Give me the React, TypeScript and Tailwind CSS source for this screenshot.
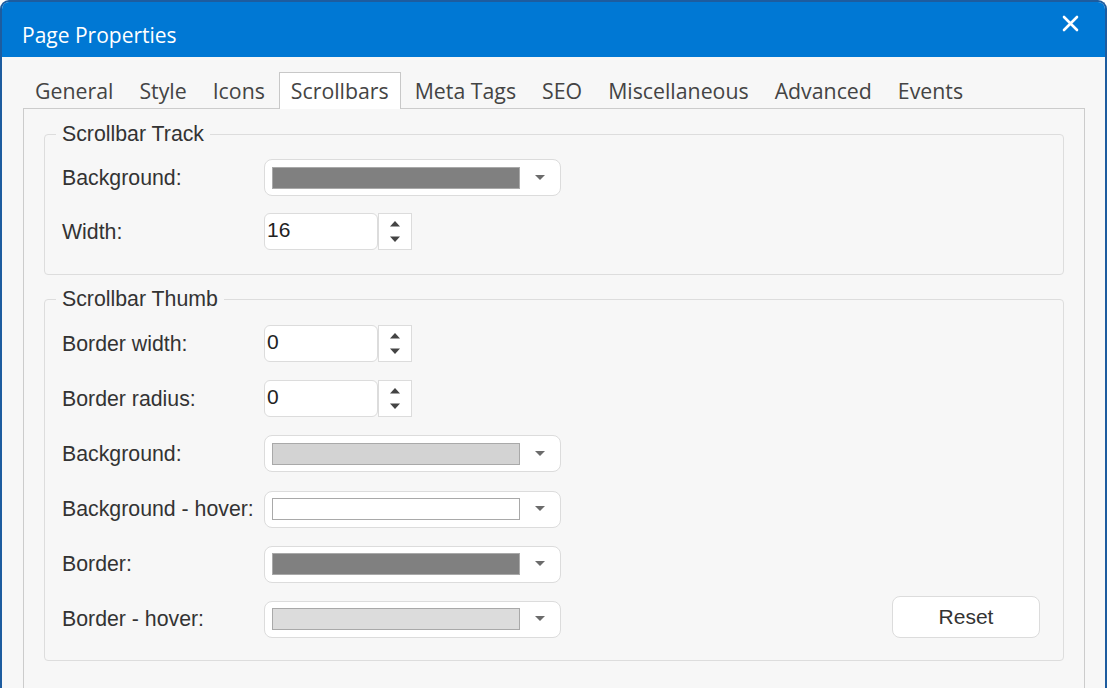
import React from 'react';

const tabs = ['General', 'Style', 'Icons', 'Scrollbars', 'Meta Tags', 'SEO', 'Miscellaneous', 'Advanced', 'Events'];

const ColorSelect = ({ color }: { color: string }) => (
  <div className="flex h-[37px] w-[297px] items-center rounded-[8px] border border-[#dcdcdc] bg-white pl-[7px]">
    <div className="h-[22px] w-[248px] border border-[#a9a9a9]" style={{ backgroundColor: color }} />
    <div className="flex flex-1 items-center justify-center">
      <svg width="10" height="6" viewBox="0 0 10 6">
        <path d="M0 0 L10 0 L5 5 Z" fill="#6b6b6b" />
      </svg>
    </div>
  </div>
);

const Spinner = ({ value }: { value: string }) => (
  <div className="flex h-[37px]">
    <div className="h-[37px] w-[114px] rounded-[6px] border border-[#dcdcdc] bg-white pl-[2px] pt-[4px] text-[21px] leading-[24px] text-[#222]">
      {value}
    </div>
    <div className="flex h-[37px] w-[34px] flex-col items-center justify-center gap-[9px] border border-[#dcdcdc] bg-white">
      <svg width="10" height="6" viewBox="0 0 10 6">
        <path d="M0 5.5 L10 5.5 L5 0 Z" fill="#444" />
      </svg>
      <svg width="10" height="6" viewBox="0 0 10 6">
        <path d="M0 0.5 L10 0.5 L5 6 Z" fill="#444" />
      </svg>
    </div>
  </div>
);

const Row = ({ label, children }: { label: string; children: React.ReactNode }) => (
  <div className="flex items-center">
    <div className="w-[202px] text-[21.3px] leading-[24px] text-[#333]">{label}</div>
    {children}
  </div>
);

const Group = ({ title, className, children }: { title: string; className?: string; children: React.ReactNode }) => (
  <fieldset className={`rounded-[4px] border border-[#dddddd] pl-[17px] pr-[23px] ${className ?? ''}`}>
    <legend className="-ml-[6px] px-[6px] text-[21.3px] leading-[24px] text-[#333]">{title}</legend>
    {children}
  </fieldset>
);

export default function App() {
  return (
    <div className="h-screen w-full overflow-hidden bg-white font-['Liberation_Sans',Arial,sans-serif]">
      <div className="flex h-[700px] w-[1107px] flex-col rounded-t-[9px] border-2 border-b-0 border-[#1d5c9f] bg-[#f7f7f7]">
        {/* Title bar */}
        <div className="flex h-[55px] items-start justify-between rounded-t-[7px] bg-[#0078d4] pl-[20px] pr-[26px]">
          <div className="pt-[19px] font-['Open_Sans',sans-serif] text-[21px] leading-[28px] text-white">Page Properties</div>
          <svg className="mt-[13px]" width="17" height="17" viewBox="0 0 17 17">
            <path d="M2 2 L15 15 M15 2 L2 15" stroke="white" strokeWidth="2.6" strokeLinecap="round" />
          </svg>
        </div>

        <div className="flex flex-1 flex-col pl-[21px] pr-[20px] pt-[15px]">
          {/* Tabs */}
          <div className="relative z-10 flex font-['Open_Sans',sans-serif] text-[21.3px] leading-[28px] text-[#444]">
            {tabs.map((t) => (
              <div
                key={t}
                className={`mr-[2px] border border-b-0 px-[11px] pb-[3px] pt-[4px] ${
                  t === 'Scrollbars' ? 'mb-[-1px] border-[#c8c8c8] bg-white pb-[4px]' : 'border-transparent'
                }`}
              >
                {t}
              </div>
            ))}
          </div>

          {/* Panel */}
          <div className="flex flex-1 flex-col border border-[#cccccc] px-[20px] pt-[13px]">
            <Group title="Scrollbar Track" className="pb-[24px] pt-[13px]">
              <div className="flex flex-col gap-[17px]">
                <Row label="Background:">
                  <ColorSelect color="#808080" />
                </Row>
                <Row label="Width:">
                  <Spinner value="16" />
                </Row>
              </div>
            </Group>

            <Group title="Scrollbar Thumb" className="mt-[12px] pb-[22px] pt-[14px]">
              <div className="flex flex-col gap-[18.2px]">
                <Row label="Border width:">
                  <Spinner value="0" />
                </Row>
                <Row label="Border radius:">
                  <Spinner value="0" />
                </Row>
                <Row label="Background:">
                  <ColorSelect color="#d3d3d3" />
                </Row>
                <Row label="Background - hover:">
                  <ColorSelect color="#ffffff" />
                </Row>
                <Row label="Border:">
                  <ColorSelect color="#808080" />
                </Row>
                <div className="flex items-start justify-between">
                  <Row label="Border - hover:">
                    <ColorSelect color="#dcdcdc" />
                  </Row>
                  <button className="-mt-[5px] h-[42px] w-[148px] rounded-[8px] border border-[#dcdcdc] bg-white text-[21px] text-[#333]">
                    Reset
                  </button>
                </div>
              </div>
            </Group>
          </div>
        </div>
      </div>
    </div>
  );
}
